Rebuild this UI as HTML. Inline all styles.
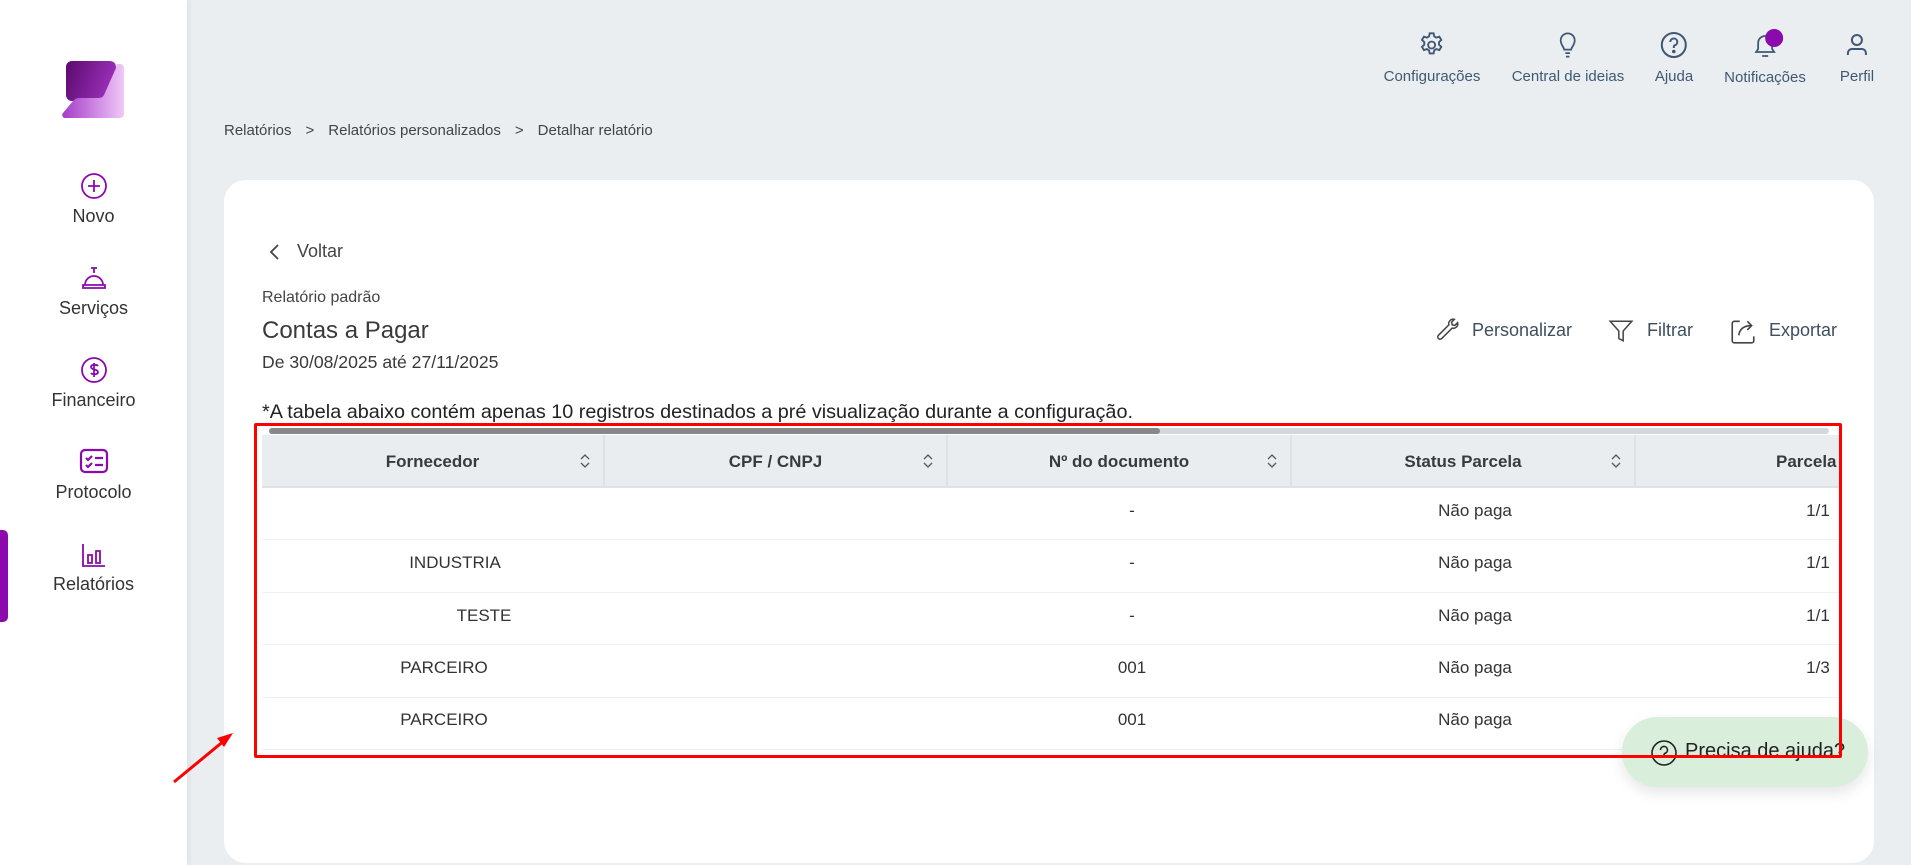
<!DOCTYPE html>
<html><head><meta charset="utf-8"><style>
*{margin:0;padding:0;box-sizing:border-box}
body{width:1911px;height:865px;overflow:hidden;background:#ebeef1;font-family:"Liberation Sans",Arial,sans-serif;position:relative;color:#333}
.a{position:absolute;white-space:nowrap}
.side{position:absolute;left:0;top:0;width:187px;height:865px;background:#fff;box-shadow:2px 0 6px rgba(0,0,0,.06)}
.nav{position:absolute;left:0;width:187px;text-align:center;font-size:18px;color:#333}
.nav svg{display:block;margin:0 auto 6px}
.top{position:absolute;text-align:center;font-size:15px;color:#3e5873;transform:translateX(-50%)}
.top .ic{position:relative;width:28px;height:28px;margin:0 auto 9px}
.top svg{display:block}
.card{position:absolute;left:224px;top:180px;width:1650px;height:683px;background:#fff;border-radius:22px}
.th{position:absolute;top:435px;height:53px;background:#e9edf0;border-right:2px solid #dde2e6;border-bottom:2px solid #dde2e6;font-size:17px;font-weight:bold;color:#3a3a3a;line-height:53px;text-align:center}
.td{position:absolute;font-size:17px;color:#333;transform:translate(-50%,-50%)}
.rl{position:absolute;left:262px;width:1580px;height:1px;background:#eef0f2}
.hv{position:absolute;width:16px;height:16px}
</style></head><body>
<div class="side">
 <svg class="a" style="left:61px;top:60px" width="64" height="58" viewBox="0 0 64 58">
  <defs><linearGradient id="g1" x1="0" y1="0" x2="1" y2="0.3"><stop offset="0" stop-color="#5a0a6e"/><stop offset="1" stop-color="#9a2fb8"/></linearGradient>
  <linearGradient id="g2" x1="0" y1="0" x2="1" y2="0"><stop offset="0" stop-color="#a43cc8"/><stop offset="1" stop-color="#f0c8f8"/></linearGradient></defs>
  <rect x="5" y="1" width="50" height="40" rx="6" fill="url(#g1)"/>
  <path d="M56 4h3a4 4 0 0 1 4 4v46a4 4 0 0 1-4 4H4a3 3 0 0 1-2-5l10-12a8 8 0 0 1 6-3h20a6 6 0 0 0 5-3l12-27z" fill="url(#g2)"/>
 </svg>
 <div style="position:absolute;left:0;top:530px;width:8px;height:92px;background:#8a0aad;border-radius:0 5px 5px 0"></div>
 <div class="nav" style="top:172px"><svg width="28" height="28" viewBox="0 0 28 28" fill="none" stroke="#8a0aad" stroke-width="1.8"><circle cx="14" cy="14" r="12"/><path d="M14 8v12M8 14h12"/></svg>Novo</div>
 <div class="nav" style="top:266px"><svg width="28" height="26" viewBox="0 0 28 26" fill="none" stroke="#8a0aad" stroke-width="1.8"><path d="M11 2h6M14 2v5M5 19a9 9 0 0 1 18 0zM3 19h22v3H3z"/></svg>Serviços</div>
 <div class="nav" style="top:356px"><svg width="28" height="28" viewBox="0 0 28 28" fill="none" stroke="#8a0aad" stroke-width="1.8"><circle cx="14" cy="14" r="12"/><path d="M18 10c-1-1.5-7-2-7 1s7 2 7 5-6 2.5-7 1M14 7v14"/></svg>Financeiro</div>
 <div class="nav" style="top:448px"><svg width="30" height="28" viewBox="0 0 30 28" fill="none" stroke="#8a0aad" stroke-width="2.2"><rect x="2" y="2" width="26" height="22" rx="4"/><path d="M7 10l2 2 4-4M7 17l2 2 4-4M16 10h8M16 17h8"/></svg>Protocolo</div>
 <div class="nav" style="top:542px"><svg width="28" height="26" viewBox="0 0 28 26" fill="none" stroke="#8a0aad" stroke-width="1.8"><path d="M3 2v22h22M8 13h4v8H8zM16 9h4v12h-4z"/></svg>Relatórios</div>
</div>

<div class="top" style="left:1432px;top:31px"><div class="ic"><svg width="28" height="28" viewBox="0 0 24 24" fill="none" stroke="#3e5873" stroke-width="1.6"><path d="M10.3 2h3.4l.5 2.6 1.9 1.1 2.5-.9 1.7 2.9-2 1.8v2.2l2 1.8-1.7 2.9-2.5-.9-1.9 1.1-.5 2.6h-3.4l-.5-2.6-1.9-1.1-2.5.9-1.7-2.9 2-1.8V9.5l-2-1.8 1.7-2.9 2.5.9 1.9-1.1z"/><circle cx="12" cy="12" r="3"/></svg></div>Configurações</div>
<div class="top" style="left:1568px;top:31px"><div class="ic"><svg width="28" height="28" viewBox="0 0 24 24" fill="none" stroke="#3e5873" stroke-width="1.5"><path d="M9 16c0-2-3-4-3-8a6 6 0 0 1 12 0c0 4-3 6-3 8zM10 19h4M10.5 22h3"/></svg></div>Central de ideias</div>
<div class="top" style="left:1674px;top:31px"><div class="ic"><svg width="28" height="28" viewBox="0 0 28 28" fill="none" stroke="#3e5873" stroke-width="2"><circle cx="14" cy="14" r="12"/><path d="M10.5 11a3.5 3.5 0 1 1 4.5 3.3c-.7.3-1 .8-1 1.7v1"/><circle cx="14" cy="20.5" r=".8" fill="#3e5873"/></svg></div>Ajuda</div>
<div class="top" style="left:1765px;top:32px"><div class="ic"><svg width="28" height="28" viewBox="0 0 28 28" fill="none" stroke="#3e5873" stroke-width="1.8"><path d="M5 20h18l-2-3v-6a7 7 0 0 0-14 0v6zM11 24h6"/></svg><span style="position:absolute;left:14px;top:-3px;width:18px;height:18px;border-radius:50%;background:#8a0aad"></span></div>Notificações</div>
<div class="top" style="left:1857px;top:31px"><div class="ic"><svg width="28" height="28" viewBox="0 0 28 28" fill="none" stroke="#3e5873" stroke-width="2"><circle cx="14" cy="9" r="5"/><path d="M5 24v-2a4 4 0 0 1 4-4h10a4 4 0 0 1 4 4v2"/></svg></div>Perfil</div>

<div class="a" style="left:224px;top:122px;font-size:15px;color:#444">Relatórios<span style="margin:0 14px 0 14px">&gt;</span>Relatórios personalizados<span style="margin:0 14px">&gt;</span>Detalhar relatório</div>

<div class="card"></div>
<svg class="a" style="left:268px;top:242px" width="14" height="20" viewBox="0 0 14 20" fill="none" stroke="#444" stroke-width="1.8"><path d="M10 3L3 10l7 7"/></svg>
<div class="a" style="left:297px;top:241px;font-size:18px;color:#444">Voltar</div>
<div class="a" style="left:262px;top:289px;font-size:16px;color:#444">Relatório padrão</div>
<div class="a" style="left:262px;top:317px;font-size:24px;color:#3a3a3a">Contas a Pagar</div>
<div class="a" style="left:262px;top:352px;font-size:17.6px;color:#3a3a3a">De 30/08/2025 até 27/11/2025</div>

<svg class="a" style="left:1433px;top:318px" width="26" height="26" viewBox="0 0 24 24" fill="none" stroke="#444" stroke-width="1.4"><path d="M14.7 6.3a4 4 0 0 1 5-5l-2.5 2.5.5 2.5 2.5.5 2.5-2.5a4 4 0 0 1-5 5L8 19a2 2 0 0 1-3-3z"/></svg>
<div class="a" style="left:1472px;top:320px;font-size:18px;color:#3e5060">Personalizar</div>
<svg class="a" style="left:1608px;top:318px" width="26" height="26" viewBox="0 0 24 24" fill="none" stroke="#444" stroke-width="1.4"><path d="M2 3h20l-8 9v9l-4-2v-7z"/></svg>
<div class="a" style="left:1647px;top:320px;font-size:18px;color:#3e5060">Filtrar</div>
<svg class="a" style="left:1730px;top:317px" width="26" height="28" viewBox="0 0 24 26" fill="none" stroke="#444" stroke-width="1.5"><path d="M9 4H4a2 2 0 0 0-2 2v16a2 2 0 0 0 2 2h16a2 2 0 0 0 2-2v-4M8 17c1-6 5-9 12-9M16 4l4 4-4 4"/></svg>
<div class="a" style="left:1769px;top:320px;font-size:18px;color:#3e5060">Exportar</div>

<div class="a" style="left:262px;top:401px;font-size:19.8px;color:#222">*A tabela abaixo contém apenas 10 registros destinados a pré visualização durante a configuração.</div>

<div class="a" style="left:269px;top:428px;width:1560px;height:6px;border-radius:3px;background:#d3d6da"></div>
<div class="a" style="left:269px;top:428px;width:891px;height:6px;border-radius:3px;background:#888"></div>

<div class="th" style="left:262px;width:343px">Fornecedor</div>
<div class="th" style="left:605px;width:343px">CPF / CNPJ</div>
<div class="th" style="left:948px;width:344px">Nº do documento</div>
<div class="th" style="left:1292px;width:344px">Status Parcela</div>
<div class="th" style="left:1636px;width:206px;border-right:none;text-align:left;padding-left:140px">Parcela</div>
<svg class="hv" style="left:577px;top:453px" viewBox="0 0 16 16" fill="none" stroke="#555" stroke-width="1.3"><path d="M4 6l4-4 4 4M4 10l4 4 4-4"/></svg>
<svg class="hv" style="left:920px;top:453px" viewBox="0 0 16 16" fill="none" stroke="#555" stroke-width="1.3"><path d="M4 6l4-4 4 4M4 10l4 4 4-4"/></svg>
<svg class="hv" style="left:1264px;top:453px" viewBox="0 0 16 16" fill="none" stroke="#555" stroke-width="1.3"><path d="M4 6l4-4 4 4M4 10l4 4 4-4"/></svg>
<svg class="hv" style="left:1608px;top:453px" viewBox="0 0 16 16" fill="none" stroke="#555" stroke-width="1.3"><path d="M4 6l4-4 4 4M4 10l4 4 4-4"/></svg>

<div class="rl" style="top:539px"></div><div class="rl" style="top:592px"></div><div class="rl" style="top:644px"></div><div class="rl" style="top:697px"></div><div class="rl" style="top:749px"></div>

<div class="td" style="left:1132px;top:511px">-</div><div class="td" style="left:1475px;top:511px">Não paga</div><div class="td" style="left:1818px;top:511px">1/1</div>
<div class="td" style="left:455px;top:563px">INDUSTRIA</div><div class="td" style="left:1132px;top:563px">-</div><div class="td" style="left:1475px;top:563px">Não paga</div><div class="td" style="left:1818px;top:563px">1/1</div>
<div class="td" style="left:484px;top:616px">TESTE</div><div class="td" style="left:1132px;top:616px">-</div><div class="td" style="left:1475px;top:616px">Não paga</div><div class="td" style="left:1818px;top:616px">1/1</div>
<div class="td" style="left:444px;top:668px">PARCEIRO</div><div class="td" style="left:1132px;top:668px">001</div><div class="td" style="left:1475px;top:668px">Não paga</div><div class="td" style="left:1818px;top:668px">1/3</div>
<div class="td" style="left:444px;top:720px">PARCEIRO</div><div class="td" style="left:1132px;top:720px">001</div><div class="td" style="left:1475px;top:720px">Não paga</div>

<div class="a" style="left:1622px;top:717px;width:246px;height:70px;border-radius:35px;background:#daeedc;box-shadow:0 6px 14px rgba(0,0,0,.1)"></div>
<svg class="a" style="left:1650px;top:739px" width="28" height="28" viewBox="0 0 28 28" fill="none" stroke="#222" stroke-width="1.6"><circle cx="14" cy="14" r="12"/><path d="M10.5 11a3.5 3.5 0 1 1 4.5 3.3c-.7.3-1 .8-1 1.7v1"/></svg>
<div class="a" style="left:1685px;top:740px;font-size:20px;color:#222">Precisa de ajuda?</div>

<div class="a" style="left:254px;top:423px;width:1588px;height:335px;border:3px solid #f00;border-radius:2px"></div>
<svg class="a" style="left:170px;top:725px" width="70" height="70" viewBox="0 0 70 70"><path d="M4 57L55 15" stroke="#f00" stroke-width="3"/><path d="M63 8L47 13l7 9z" fill="#f00"/></svg>
</body></html>
